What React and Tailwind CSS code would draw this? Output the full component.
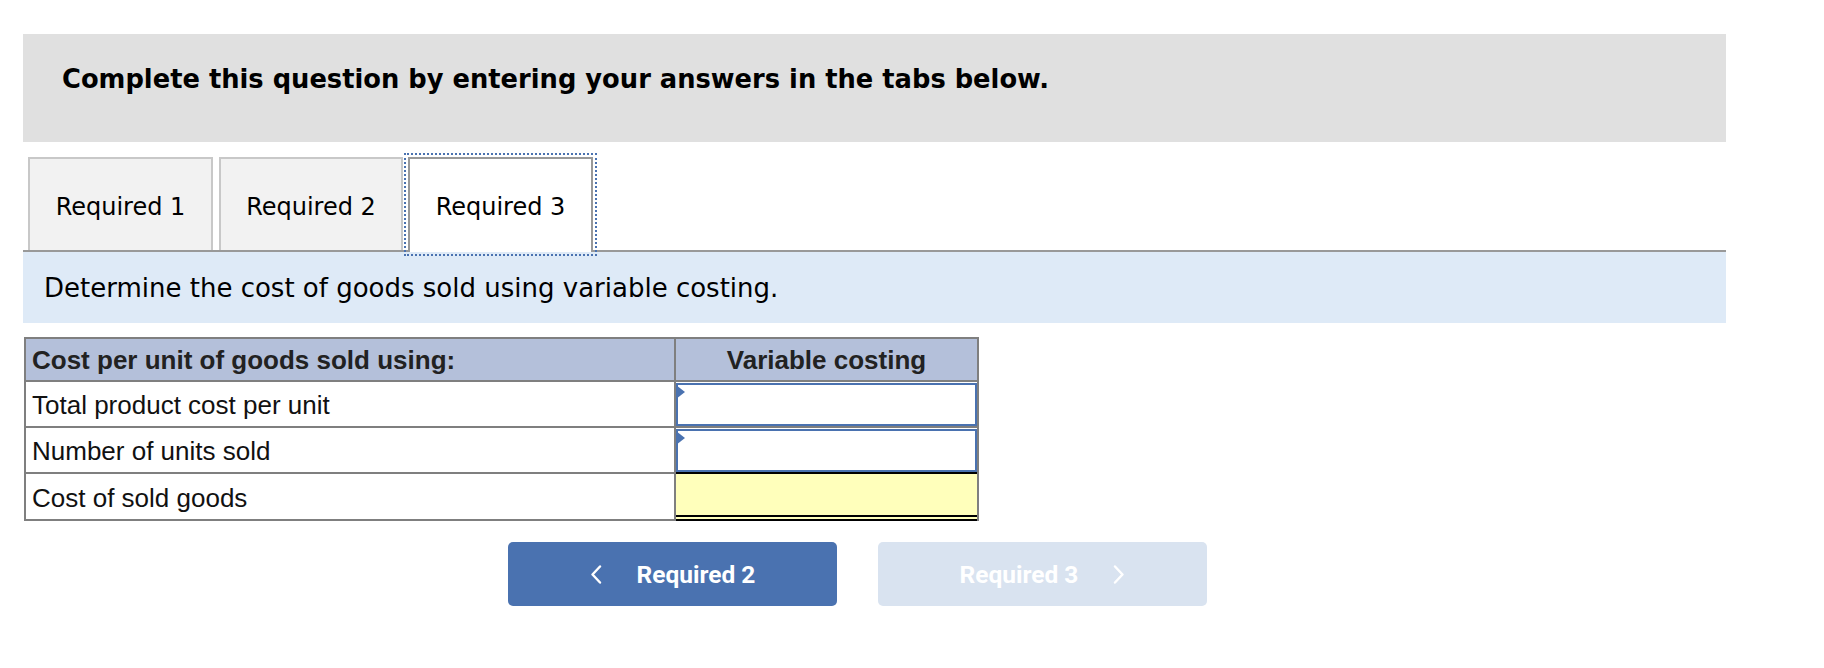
import React from 'react';

const verdana = { fontFamily: '"DejaVu Sans", Verdana, sans-serif' };
const arial = { fontFamily: '"Liberation Sans", Arial, sans-serif' };
const btnFont = { fontFamily: 'Roboto, "Liberation Sans", sans-serif' };

const rows = [
  { label: 'Total product cost per unit', kind: 'input' },
  { label: 'Number of units sold', kind: 'input' },
  { label: 'Cost of sold goods', kind: 'total' },
];

const Chevron = ({ dir }) => (
  <svg width="12" height="19" viewBox="0 0 12 19" fill="none">
    <polyline
      points={dir === 'left' ? '10,1.5 2.5,9.5 10,17.5' : '2,1.5 9.5,9.5 2,17.5'}
      stroke="white"
      strokeWidth="2.4"
      strokeLinecap="round"
      strokeLinejoin="round"
    />
  </svg>
);

const InputCell = () => (
  <div className="relative h-full w-full pt-[1px]">
    <div className="h-[43px] border-2 border-[#4a72b0] bg-white" />
    {/* little marker in the corner */}
    <div className="absolute left-0 top-[3px] w-0 h-0 border-t-[7px] border-b-[7px] border-l-[9px] border-t-transparent border-b-transparent border-l-[#4a72b0]" />
  </div>
);

export default function App() {
  const tabs = ['Required 1', 'Required 2', 'Required 3'];

  return (
    <div className="w-[1824px] h-[668px] bg-white pt-[34px] pl-[23px]">
      <div className="w-[1703px]">
        {/* header */}
        <div className="h-[108px] bg-[#e0e0e0] pl-[39px] pb-[17px] flex items-center">
          <h1 className="text-[25.75px] font-bold text-black" style={verdana}>
            Complete this question by entering your answers in the tabs below.
          </h1>
        </div>

        {/* tabs */}
        <div className="mt-[15px] h-[95px] flex items-end pl-[5px] border-b-2 border-[#999]">
          {tabs.map((t, i) => {
            const active = i === 2;
            return (
              <div
                key={t}
                className={
                  active
                    ? 'ml-[5px] w-[185px] h-[95px] -mb-[2px] bg-white border-2 border-b-0 border-[#999] outline-2 outline-dotted outline-[#4a72b0] outline-offset-[2px] flex items-center justify-center text-[24px] text-black'
                    : `${i === 1 ? 'ml-[6px] w-[184px]' : 'w-[185px]'} h-[93px] bg-[#f2f2f2] border-2 border-b-0 border-[#c8c8c8] flex items-center justify-center text-[24px] text-black`
                }
                style={verdana}
              >
                <span className={active ? 'pt-[2px]' : 'pt-[4px]'}>{t}</span>
              </div>
            );
          })}
        </div>

        {/* instruction */}
        <div className="h-[71px] bg-[#deeaf7] pl-[21px] flex items-center">
          <p className="text-[26px] text-black pt-[1px]" style={verdana}>
            Determine the cost of goods sold using variable costing.
          </p>
        </div>

        {/* table */}
        <div className="mt-[14px] ml-[1px] w-[955px] border-2 border-b-0 border-[#7f7f7f]" style={arial}>
          <div className="flex h-[43px] bg-[#b4c0da] border-b-2 border-[#7f7f7f]">
            <div className="w-[650px] border-r-2 border-[#7f7f7f] pl-[6px] pt-[2px] flex items-center text-[26px] font-bold text-[#222]">
              Cost per unit of goods sold using:
            </div>
            <div className="flex-1 flex items-center justify-center pt-[2px] text-[26px] font-bold text-[#222]">
              Variable costing
            </div>
          </div>
          {rows.map((r, i) => (
            <div key={r.label} className={`flex ${i < 2 ? 'h-[46px] border-b-2 border-[#7f7f7f]' : 'h-[47px]'}`}>
              <div
                className={`w-[650px] border-r-2 border-[#7f7f7f] pl-[6px] pt-[3px] flex items-center text-[26px] text-[#111] ${
                  i === 2 ? 'border-b-2' : ''
                }`}
              >
                {r.label}
              </div>
              <div className="flex-1">
                {r.kind === 'input' ? (
                  <InputCell />
                ) : (
                  <div className="bg-[#ffffbb] border-t-2 border-b-[6px] border-double border-t-black border-b-black -mt-[2px] h-[49px]" />
                )}
              </div>
            </div>
          ))}
        </div>

        {/* nav buttons */}
        <div className="mt-[21px] ml-[485px] flex gap-[41px]" style={btnFont}>
          <button className="w-[329px] h-[64px] rounded-[5px] bg-[#4a72b0] text-white flex items-center justify-center gap-[35px] text-[24.5px] font-bold">
            <Chevron dir="left" />
            <span className="pt-[3px]">Required 2</span>
          </button>
          <button className="w-[329px] h-[64px] rounded-[5px] bg-[#d9e3f0] text-white flex items-center justify-center gap-[35px] text-[24.5px] font-bold">
            <span className="pt-[3px]">Required 3</span>
            <Chevron dir="right" />
          </button>
        </div>
      </div>
    </div>
  );
}
